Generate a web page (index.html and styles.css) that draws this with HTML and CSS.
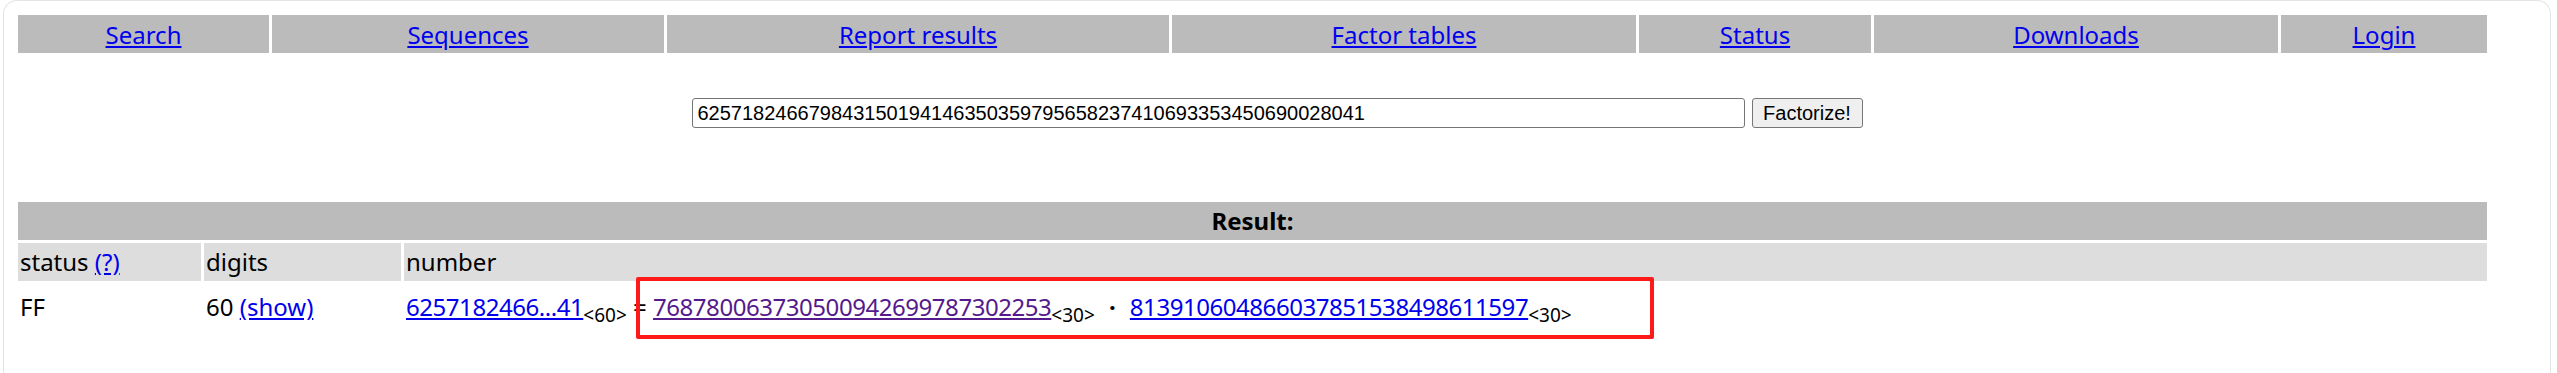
FILE: index.html
```html
<!DOCTYPE html>
<html>
<head>
<meta charset="utf-8">
<title>factordb</title>
<link rel="stylesheet" href="styles.css">
</head>
<body>
<div class="window">
  <nav class="nav">
    <div class="nav-cell"><a href="#">Search</a></div>
    <div class="nav-cell"><a href="#">Sequences</a></div>
    <div class="nav-cell"><a href="#">Report results</a></div>
    <div class="nav-cell"><a href="#">Factor tables</a></div>
    <div class="nav-cell"><a href="#">Status</a></div>
    <div class="nav-cell"><a href="#">Downloads</a></div>
    <div class="nav-cell"><a href="#">Login</a></div>
  </nav>

  <form class="query">
    <input class="query-input" type="text" value="625718246679843150194146350359795658237410693353450690028041">
    <button class="query-btn" type="button">Factorize!</button>
  </form>

  <section class="result">
    <div class="result-title">Result:</div>
    <div class="result-head">status <a href="#">(?)</a></div>
    <div class="result-head">digits</div>
    <div class="result-head">number</div>
    <div class="result-cell">FF</div>
    <div class="result-cell">60 <a href="#">(show)</a></div>
    <div class="result-cell number">
      <a class="num" href="#">6257182466...41</a><sub>&lt;60&gt;</sub> = <a class="num visited" href="#">768780063730500942699787302253</a><sub>&lt;30&gt;</sub><span class="dot">·</span><a class="num" href="#">813910604866037851538498611597</a><sub>&lt;30&gt;</sub>
      <span class="mark"></span>
    </div>
  </section>
</div>
</body>
</html>
```

FILE: styles.css
```css
html, body {
  margin: 0;
  padding: 0;
  background: #ffffff;
}

body {
  font-family: "Noto Sans", Lato, sans-serif;
  font-size: 24px;
  color: #000;
}

a {
  color: #0000ee;
  text-decoration: underline;
}

.window {
  box-sizing: border-box;
  margin: 0 6px 0 3px;
  height: 373px;
  border: 1px solid #e4e4e4;
  border-bottom: none;
  border-radius: 14px 14px 0 0;
  padding: 14px 0 0 14px;
}

.nav {
  display: grid;
  grid-template-columns: 251px 392px 502px 464px 232px 404px 206px;
  column-gap: 3px;
}

.nav-cell {
  background: #bbbbbb;
  height: 38px;
  line-height: 40px;
  text-align: center;
}

.query {
  display: flex;
  justify-content: center;
  gap: 7px;
  margin: 45px 14px 0 0;
}

.query-input {
  box-sizing: border-box;
  width: 1053px;
  height: 30px;
  border: 1px solid #767676;
  border-radius: 3px;
  padding: 0 5px;
  font-family: "Liberation Sans", Arial, sans-serif;
  font-size: 20px;
  color: #000;
}

.query-btn {
  box-sizing: border-box;
  width: 111px;
  height: 30px;
  border: 1px solid #767676;
  border-radius: 3px;
  background: #efefef;
  padding: 0;
  font-family: "Liberation Sans", Arial, sans-serif;
  font-size: 20px;
  color: #000;
}

.result {
  display: grid;
  width: 2469px;
  grid-template-columns: 183px 197px 2083px;
  gap: 3px;
  margin-top: 74px;
}

.result-title {
  grid-column: 1 / -1;
  background: #bbbbbb;
  height: 38px;
  line-height: 38px;
  text-align: center;
  font-weight: bold;
}

.result-head {
  background: #dddddd;
  height: 38px;
  line-height: 38px;
  padding-left: 2px;
}

.result-cell {
  height: 46px;
  line-height: 46px;
  padding-left: 2px;
  white-space: nowrap;
}

.number {
  position: relative;
}

.num {
  letter-spacing: -0.45px;
}

.result-cell sub {
  font-size: 19px;
  vertical-align: -6px;
  line-height: 0;
}

.dot {
  display: inline-block;
  width: 35px;
  text-align: center;
  font-weight: bold;
}

a.visited {
  color: #551a8b;
}

.mark {
  position: absolute;
  left: 232px;
  top: -7px;
  width: 1018px;
  height: 62px;
  box-sizing: border-box;
  border: 4px solid #ff1a1a;
  border-radius: 2px;
  pointer-events: none;
}
```
